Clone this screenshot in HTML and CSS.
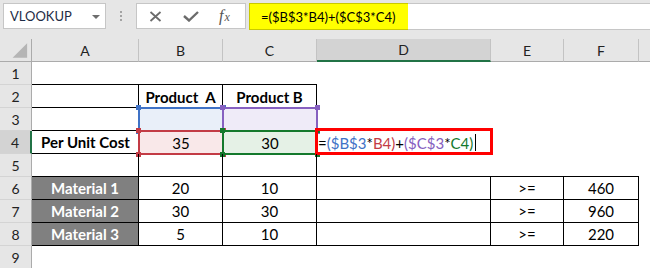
FILE: index.html
```html
<!DOCTYPE html>
<html>
<head>
<meta charset="utf-8">
<link rel="stylesheet" href="styles.css">
</head>
<body>
<div class="toolbar">
  <div class="namebox"><span class="nb-text">VLOOKUP</span><span class="nb-arrow"></span></div>
  <div class="grip"><span></span><span></span><span></span></div>
  <div class="fbuttons">
    <svg class="ic-x" width="13" height="11" viewBox="0 0 13 11"><path d="M1.5 1 L11.5 10 M11.5 1 L1.5 10" stroke="#6b6b6b" stroke-width="1.8" fill="none"/></svg>
    <svg class="ic-ok" width="16" height="11" viewBox="0 0 16 11"><path d="M1 5 L6 9.5 L15 1" stroke="#6b6b6b" stroke-width="2.4" fill="none"/></svg>
    <span class="fx"><i>f</i><i class="fx-x">x</i></span>
  </div>
  <div class="fbar"><span class="fbar-text">=($B$3*B4)+($C$3*C4)</span></div>
</div>
<div class="sheet">
  <div class="hd corner"><svg width="32" height="22" viewBox="0 0 32 22"><polygon points="28,4 28,19 13,19" fill="#b5b5b5"/></svg></div>
  <div class="hd">A</div><div class="hd">B</div><div class="hd">C</div><div class="hd sel">D</div><div class="hd">E</div><div class="hd">F</div><div class="hd last"></div>

  <div class="rh">1</div>
  <div class="c bb"></div><div class="c bb"></div><div class="c bb"></div><div class="c"></div><div class="c"></div><div class="c"></div><div class="c"></div>

  <div class="rh">2</div>
  <div class="c bb br"></div><div class="c br b">Product  A</div><div class="c br b">Product B</div><div class="c"></div><div class="c"></div><div class="c"></div><div class="c"></div>

  <div class="rh">3</div>
  <div class="c bb"></div>
  <div class="c f-blue"><span class="range r-blue"><i class="k tl"></i><i class="k tr"></i><i class="k bl"></i><i class="k brc"></i></span></div>
  <div class="c f-purple"><span class="range r-purple"><i class="k tl"></i><i class="k tr"></i><i class="k bl"></i><i class="k brc"></i></span></div>
  <div class="c"></div><div class="c"></div><div class="c"></div><div class="c"></div>

  <div class="rh sel">4</div>
  <div class="c bb b">Per Unit Cost</div>
  <div class="c f-red">35<span class="range r-red"><i class="k tl"></i><i class="k tr"></i><i class="k bl"></i><i class="k brc"></i></span></div>
  <div class="c f-green">30<span class="range r-green"><i class="k tl"></i><i class="k tr"></i><i class="k bl"></i><i class="k brc"></i></span></div>
  <div class="c edit-cell"><span class="t-blk">=</span><span class="t-blue">($B$3</span><span class="t-blk">*</span><span class="t-red">B4)</span><span class="t-blk">+</span><span class="t-purple">($C$3</span><span class="t-blk">*</span><span class="t-green">C4)</span><span class="caret"></span><span class="editbox"></span></div>
  <div class="c"></div><div class="c"></div><div class="c"></div>

  <div class="rh">5</div>
  <div class="c bb br"></div><div class="c bb br"></div><div class="c bb br"></div><div class="c bb"></div><div class="c bb"></div><div class="c bb"></div><div class="c"></div>

  <div class="rh">6</div>
  <div class="c bb br mat">Material 1</div><div class="c bb br">20</div><div class="c bb br">10</div><div class="c bb br"></div><div class="c bb br">&gt;=</div><div class="c bb br">460</div><div class="c"></div>

  <div class="rh">7</div>
  <div class="c bb br mat">Material 2</div><div class="c bb br">30</div><div class="c bb br">30</div><div class="c bb br"></div><div class="c bb br">&gt;=</div><div class="c bb br">960</div><div class="c"></div>

  <div class="rh">8</div>
  <div class="c bb br mat">Material 3</div><div class="c bb br">5</div><div class="c bb br">10</div><div class="c bb br"></div><div class="c bb br">&gt;=</div><div class="c bb br">220</div><div class="c"></div>

  <div class="rh">9</div>
  <div class="c"></div><div class="c"></div><div class="c"></div><div class="c"></div><div class="c"></div><div class="c"></div><div class="c"></div>
</div>
</body>
</html>
```

FILE: styles.css
```css
* { box-sizing: border-box; margin: 0; padding: 0; }
html, body { margin: 0; }
body {
  width: 650px;
  height: 268px;
  overflow: hidden;
  background: #fff;
  font-family: Lato, "Liberation Sans", sans-serif;
}

.toolbar {
  height: 39px;
  background: #e6e6e6;
  display: flex;
  align-items: flex-start;
  padding: 3px 0 0 3px;
}
.namebox {
  width: 103px;
  height: 26px;
  background: #fff;
  border: 1px solid #c6c6c6;
  display: flex;
  align-items: center;
  justify-content: space-between;
  padding: 0 5px 0 6px;
  font-size: 13px;
  color: #1d2b45;
}
.nb-arrow {
  width: 0;
  height: 0;
  border-left: 4px solid transparent;
  border-right: 4px solid transparent;
  border-top: 4px solid #6d6d6d;
  margin-top: 1px;
}
.grip {
  width: 30px;
  height: 26px;
  display: flex;
  flex-direction: column;
  align-items: center;
  justify-content: center;
  gap: 2px;
}
.grip span {
  width: 2px;
  height: 2px;
  background: #a3a3a3;
}
.fbuttons {
  width: 110px;
  height: 26px;
  background: #fff;
  border: 1px solid #c6c6c6;
  display: flex;
  align-items: center;
  padding-left: 12px;
}
.ic-ok { margin-left: 21px; }
.fx {
  margin-left: 20px;
  font-family: "Liberation Serif", serif;
  font-size: 16px;
  color: #555;
  line-height: 1;
}
.fx i { font-style: italic; }
.fx-x { font-size: 12px; margin-left: 1px; }

.fbar {
  margin-left: 3px;
  flex: 1;
  height: 27px;
  background: #fff;
  border: 1px solid #c6c6c6;
  border-right: none;
  display: flex;
}
.fbar-text {
  margin: -1px 0 -1px -1px;
  width: 159px;
  background: #ffff00;
  border: 1px solid #c9c900;
  border-right: none;
  padding-left: 11px;
  display: flex;
  align-items: center;
  font-size: 13px;
  color: #000;
}

.sheet {
  display: grid;
  grid-template-columns: 32px 107px 84px 94px 174px 73px 75px 11px;
  grid-auto-rows: 23px;
}
.hd {
  background: #e6e6e6;
  border-right: 1px solid #c3c3c3;
  border-bottom: 1px solid #ababab;
  display: flex;
  align-items: center;
  justify-content: center;
  font-size: 14px;
  color: #222;
}
.hd.sel {
  background: #d3d3d3;
  border-bottom: 2px solid #217346;
}
.hd.last { border-right: none; }
.corner { border-right: 1px solid #ababab; }
.corner svg { display: block; }
.rh {
  background: #e6e6e6;
  border-right: 1px solid #ababab;
  border-bottom: 1px solid #d4d4d4;
  display: flex;
  align-items: center;
  justify-content: center;
  font-size: 14px;
  color: #222;
}
.rh.sel {
  background: #d3d3d3;
  border-right: 2px solid #217346;
}

.c {
  position: relative;
  display: flex;
  align-items: center;
  justify-content: center;
  font-size: 15px;
  color: #000;
  white-space: pre;
}
.bb { border-bottom: 1px solid #000; }
.br { border-right: 1px solid #000; }
.b { font-weight: 700; }
.mat {
  background: #808080;
  color: #fff;
  font-weight: 700;
}

.f-blue { background: #e9eff9; }
.f-purple { background: #efebf8; }
.f-red { background: #f9e8e9; }
.f-green { background: #e5f1e6; }

.range {
  position: absolute;
  left: -1px;
  top: -1px;
  width: calc(100% + 2px);
  height: calc(100% + 2px);
  border: 2px solid currentColor;
}
.r-blue { color: #3f72c6; }
.r-purple { color: #8660c0; }
.r-red { color: #c33b45; }
.r-green { color: #14792c; }
.k {
  position: absolute;
  width: 5px;
  height: 5px;
  background: currentColor;
}
.k.tl { left: -4px; top: -4px; }
.k.tr { right: -4px; top: -4px; }
.k.bl { left: -4px; bottom: -4px; }
.k.brc { right: -4px; bottom: -4px; }

.edit-cell {
  justify-content: flex-start;
  padding-left: 1px;
}
.t-blk { color: #000; }
.t-blue { color: #3f72c6; }
.t-red { color: #c33b45; }
.t-purple { color: #8660c0; }
.t-green { color: #14792c; }
.caret {
  width: 1px;
  height: 17px;
  background: #000;
  margin-left: 2px;
}
.editbox {
  position: absolute;
  left: -2px;
  top: -3px;
  width: 178px;
  height: 27px;
  border: 3px solid #ff0000;
}
```
